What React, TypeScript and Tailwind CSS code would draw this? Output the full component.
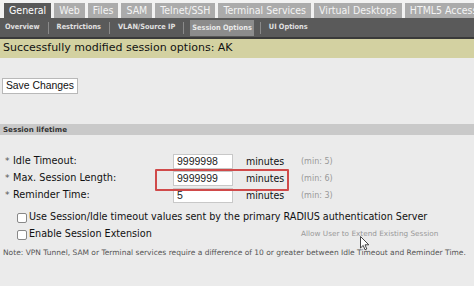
import React from "react";

const tabs = ["General", "Web", "Files", "SAM", "Telnet/SSH", "Terminal Services", "Virtual Desktops", "HTML5 Access"];
const sub = ["Overview", "Restrictions", "VLAN/Source IP", "Session Options", "UI Options"];

const cond = "font-['DejaVu_Sans_Condensed','DejaVu_Sans',sans-serif]";
const arial = "font-['Liberation_Sans',Arial,sans-serif]";

function Row({ label, value, min }: { label: string; value: string; min: string }) {
  return (
    <div className="flex items-center h-[17px]">
      <div className="w-[5px]" />
      <span className="w-[8px] text-[9px] text-[#555]">*</span>
      <span className={`w-[160px] text-[10.8px] text-[#111] ${cond}`}>{label}</span>
      <div className={`w-[60px] h-[15px] bg-white border border-[#c8c8c8] text-[10.5px] text-[#222] pl-[3px] leading-[13px] whitespace-nowrap ${arial}`}>{value}</div>
      <span className={`ml-[13px] w-[55px] text-[10.5px] text-[#111] ${cond}`}>minutes</span>
      <span className="text-[8px] text-[#999]">{min}</span>
    </div>
  );
}

export default function App() {
  return (
    <div className="relative w-[474px] h-[286px] overflow-hidden bg-[#ebebeb] font-['DejaVu_Sans',sans-serif]">
      <div className="flex gap-[3px] pl-[4px] pt-[3px] h-[18px] bg-[#f2f2f2] whitespace-nowrap overflow-hidden">
        {tabs.map((t, i) => (
          <div
            key={t}
            className={
              (i === 0
                ? "bg-[#595959] text-white "
                : "bg-[#ababab] text-[#f4f4f4] ") +
              `shrink-0 px-[5px] h-[15px] text-[10.5px] leading-[15px] ${cond}`
            }
          >
            {t}
          </div>
        ))}
      </div>
      <div className="flex items-center h-[21px] bg-[#5a5a5a] border-b-2 border-[#3a3a3a] pl-[3px] whitespace-nowrap">
        {sub.map((s, i) => (
          <React.Fragment key={s}>
            {i > 0 && <div className="w-px h-[12px] bg-[#8a8a8a] mx-[6px]" />}
            <div
              className={
                (s === "Session Options"
                  ? "h-[16px] leading-[16px] bg-[#8c8c8c] text-[#e8e8e8] "
                  : "text-[#e0e0e0] ") +
                `px-[2px] text-[7.3px] font-bold ${cond}`
              }
            >
              {s}
            </div>
          </React.Fragment>
        ))}
      </div>
      <div className="h-[19px] bg-[#d3d1a1] flex items-center pl-[3px] text-[11px] text-[#111]">
        Successfully modified session options: AK
      </div>
      <div className="pt-[20px] pl-[2px] flex">
        <div className={`w-[76px] h-[16px] flex items-center justify-center whitespace-nowrap bg-white border border-[#b8b8b8] text-[10.4px] text-[#111] ${arial}`}>
          Save Changes
        </div>
      </div>
      <div className="mt-[30px] h-[11px] bg-[#c9c9c9] pl-[3px] text-[7.1px] font-bold text-[#333] leading-[11px]">
        Session lifetime
      </div>
      <div className="pt-[18px] flex flex-col">
        <Row label="Idle Timeout:" value="9999998" min="(min: 5)" />
        <Row label="Max. Session Length:" value="9999999" min="(min: 6)" />
        <Row label="Reminder Time:" value="5" min="(min: 3)" />
        <div className="flex items-center h-[17px] pl-[17px] mt-[5px] whitespace-nowrap">
          <div className="w-[10px] h-[10px] bg-white border border-[#888] rounded-[2px] mr-[2px]" />
          <span className={`text-[10.7px] text-[#111] ${cond}`}>Use Session/Idle timeout values sent by the primary RADIUS authentication Server</span>
        </div>
        <div className="flex items-center h-[17px] pl-[17px] whitespace-nowrap">
          <div className="w-[10px] h-[10px] bg-white border border-[#888] rounded-[2px] mr-[2px]" />
          <span className={`w-[272px] text-[10.7px] text-[#111] ${cond}`}>Enable Session Extension</span>
          <span className="text-[7.3px] text-[#999]">Allow User to Extend Existing Session</span>
        </div>
        <div className="pl-[3px] mt-[4px] text-[7.5px] text-[#555] whitespace-nowrap">
          Note: VPN Tunnel, SAM or Terminal services require a difference of 10 or greater between Idle Timeout and Reminder Time.
        </div>
      </div>
      <div className="absolute left-[155px] top-[169px] w-[134px] h-[22px] border-2 border-[#d04a4a] rounded-[1px]" />
      <svg className="absolute left-[360px] top-[236px]" width="10" height="15" viewBox="0 0 10 15">
        <path d="M0.5 0.5 L0.5 12 L3.2 9.4 L5 13.8 L6.8 13 L5 8.8 L8.8 8.8 Z" fill="white" stroke="#333" strokeWidth="0.9" />
      </svg>
    </div>
  );
}
